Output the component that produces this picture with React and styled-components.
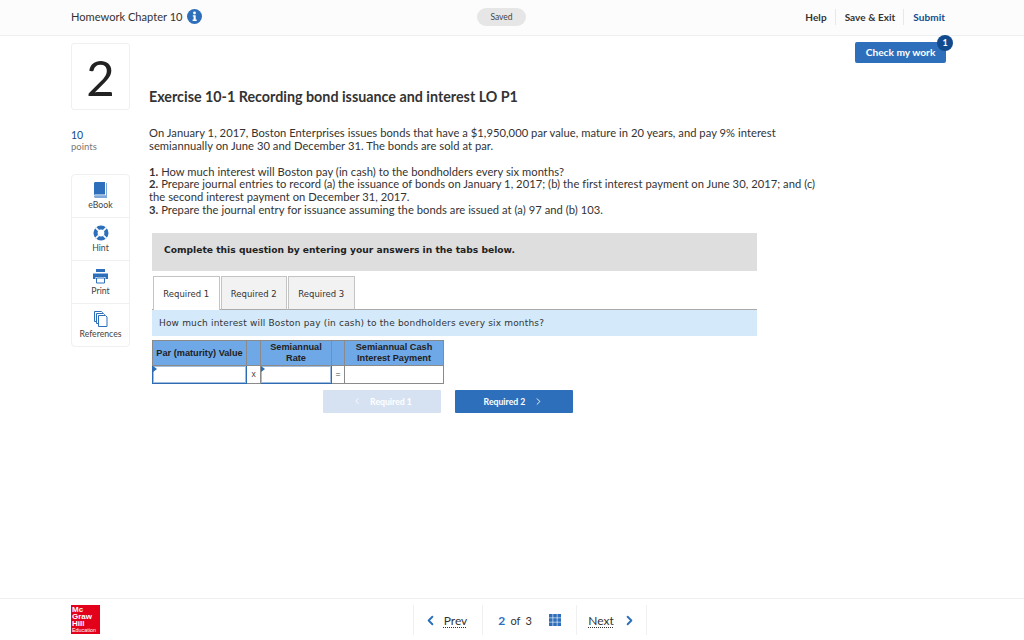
import React from "react";
import styled, { createGlobalStyle } from "styled-components";
import { ChevronLeft, ChevronRight } from "lucide-react";

const Global = createGlobalStyle`
  html, body { margin: 0; padding: 0; background: #fff; }
  body { font-family: "Lato", "Liberation Sans", sans-serif; color: #333; }
`;

const Page = styled.div`
  width: 1024px;
  height: 640px;
  display: flex;
  flex-direction: column;
  overflow: hidden;
`;

const Header = styled.header`
  height: 33px;
  flex: none;
  display: grid;
  grid-template-columns: 406px 49px 1fr;
  align-items: center;
  padding: 0 79px 2px 71px;
  background: #fcfcfc;
  border-bottom: 1px solid #efefef;
`;

const HeaderTitle = styled.div`
  display: flex;
  align-items: center;
  gap: 4px;
  font-size: 11.1px;
  color: #333;
`;

const SavedPill = styled.div`
  height: 18px;
  line-height: 18px;
  text-align: center;
  border-radius: 9px;
  background: #e6e6e6;
  font-size: 8.5px;
  color: #444;
`;

const HeaderLinks = styled.nav`
  display: flex;
  justify-content: flex-end;
  align-items: center;
`;

const HeaderLink = styled.a`
  font-size: 10px;
  font-weight: 700;
  line-height: 16px;
  letter-spacing: 0.05px;
  padding: 0 8px 0 9px;
  color: ${(p) => (p.$accent ? "#114b8e" : "#333")};
  border-left: ${(p) => (p.$first ? "none" : "1px solid #e8e8e8")};
  &:last-child { padding-right: 0; }
`;

const Body = styled.div`
  flex: 1;
  display: flex;
  padding: 7px 0 0 71px;
`;

const LeftCol = styled.aside`
  width: 59px;
  flex: none;
`;

const NumberBox = styled.div`
  height: 65px;
  width: 57px;
  border: 1px solid #f0f0f0;
  border-radius: 3px;
  display: flex;
  align-items: center;
  justify-content: center;
  font-size: 49px;
  color: #222;
`;

const Points = styled.div`
  margin-top: 19px;
  font-size: 9.5px;
  line-height: 12px;
  color: #777;
  strong { display: block; font-weight: 400; color: #114b8e; font-size: 10.5px; }
`;

const ToolCard = styled.div`
  margin-top: 21px;
  height: 171px;
  width: 57px;
  display: flex;
  flex-direction: column;
  border: 1px solid #f0f0f0;
  border-radius: 4px;
`;

const Tool = styled.div`
  flex: 1;
  box-sizing: border-box;
  display: flex;
  flex-direction: column;
  align-items: center;
  padding-top: 7px;
  font-size: 8.7px;
  line-height: 11px;
  color: #444;
  border-top: ${(p) => (p.$first ? "none" : "1px solid #f0f0f0")};
  svg { height: 16px; margin-bottom: 1px; }
`;

const Main = styled.main`
  width: 667px;
  margin-left: 19px;
  flex: none;
`;

const Title = styled.h1`
  margin: 46px 0 0;
  font-size: 14.3px;
  line-height: 16px;
  font-weight: 700;
  color: #333;
`;

const Text = styled.p`
  margin: ${(p) => p.$top}px 0 0;
  width: 672px;
  font-size: 11.2px;
  line-height: 12.8px;
  letter-spacing: 0.04px;
  color: #333;
  b { font-weight: 700; }
`;

const Panel = styled.div`
  margin: 16px 0 0 3px;
  width: 605px;
`;

const Banner = styled.div`
  height: 38px;
  box-sizing: border-box;
  padding: 0 12px 4px;
  display: flex;
  align-items: center;
  background: #dedede;
  font-family: "DejaVu Sans", Verdana, sans-serif;
  font-size: 9.17px;
  font-weight: 700;
  color: #222;
`;

const Tabs = styled.div`
  margin-top: 5px;
  padding-left: 1px;
  display: flex;
  gap: 1px;
  height: 34px;
  box-sizing: border-box;
  border-bottom: 1px solid #aaa;
`;

const Tab = styled.div`
  width: 66.5px;
  box-sizing: border-box;
  height: 34px;
  padding-top: 2px;
  display: flex;
  align-items: center;
  justify-content: center;
  font-family: "DejaVu Sans", Verdana, sans-serif;
  font-size: 8.5px;
  color: #333;
  background: ${(p) => (p.$active ? "#fff" : "#f2f2f2")};
  border: 1px solid #c4c4c4;
  border-bottom: ${(p) => (p.$active ? "none" : "1px solid #aaa")};
`;

const Prompt = styled.div`
  height: 26px;
  box-sizing: border-box;
  padding: 0 7px;
  display: flex;
  align-items: center;
  background: #d4eafa;
  font-family: "DejaVu Sans", Verdana, sans-serif;
  font-size: 9px;
  letter-spacing: 0.17px;
  color: #333;
`;

const Table = styled.table`
  margin-top: 4px;
  border-collapse: collapse;
  table-layout: fixed;
  width: 291px;
  font-family: "Liberation Sans", Arial, sans-serif;
`;

const Th = styled.th`
  height: 24px;
  padding: 0;
  background: #6fa8e6;
  border: 1px solid #8a8a8a;
  font-size: 9.2px;
  line-height: 10.5px;
  font-weight: 700;
  color: #222;
  text-align: center;
`;

const Td = styled.td`
  height: 17px;
  padding: 0;
  border-bottom: 1px solid #8a8a8a;
  border-right: 1px solid #8a8a8a;
  font-size: 8.5px;
  color: #444;
  text-align: center;
`;

const InputCell = styled.td`
  height: 17px;
  padding: 0;
  border: 1px solid #2d6cb5;
  box-shadow: inset 0 0 0 1px rgba(45, 108, 181, 0.45);
  position: relative;
  &::before {
    content: "";
    position: absolute;
    top: 0;
    left: 0;
    border-top: 3px solid transparent;
    border-bottom: 3px solid transparent;
    border-left: 4px solid #2d6cb5;
  }
`;

const PagerRow = styled.div`
  margin-top: 6px;
  padding-left: 171px;
  display: flex;
  gap: 14px;
`;

const PagerBtn = styled.button`
  width: 118px;
  height: 23px;
  padding: 0;
  border: none;
  border-radius: 1px;
  display: flex;
  align-items: center;
  justify-content: center;
  gap: 8px;
  font-family: "Lato", sans-serif;
  font-size: 8.7px;
  font-weight: 700;
  color: #fff;
  background: ${(p) => (p.disabled ? "#d6e2f1" : "#2d6fbb")};
`;

const RightCol = styled.aside`
  margin: -1px 0 0 39px;
  display: flex;
  align-items: flex-start;
`;

const CheckBtn = styled.button`
  position: relative;
  width: 91px;
  height: 21px;
  padding: 0 0 2px;
  border: none;
  border-radius: 2px;
  background: #2d6fbb;
  color: #fff;
  font-family: "Lato", sans-serif;
  font-size: 10.2px;
  font-weight: 700;
`;

const Badge = styled.span`
  position: absolute;
  top: -7px;
  right: -7px;
  width: 16px;
  height: 16px;
  line-height: 16px;
  border-radius: 50%;
  background: #114b8e;
  font-size: 9px;
  text-align: center;
`;

const Footer = styled.footer`
  height: 42px;
  flex: none;
  box-sizing: border-box;
  border-top: 1px solid #efefef;
  display: flex;
  padding: 6px 0 0 71px;
`;

const Logo = styled.div`
  width: 29px;
  height: 29px;
  box-sizing: border-box;
  padding: 1px 1px;
  background: #e2001a;
  color: #fff;
  font-family: "Liberation Sans", Arial, sans-serif;
  font-size: 8px;
  line-height: 7px;
  font-weight: 700;
  small { display: block; font-size: 5.4px; font-weight: 400; line-height: 6px; }
`;

const FooterNav = styled.nav`
  margin-left: 313px;
  display: flex;
  height: 30px;
  border-right: 1px solid #f0f0f0;
`;

const NavPart = styled.div`
  width: ${(p) => p.$w}px;
  box-sizing: border-box;
  display: flex;
  align-items: center;
  justify-content: center;
  gap: ${(p) => p.$gap}px;
  padding: ${(p) => p.$pad || "0"};
  border-left: 1px solid #f0f0f0;
  font-size: 12px;
  color: #333;
  svg { color: #2d6fbb; }
`;

const NavLabel = styled.span`
  text-decoration: underline dotted;
  text-underline-offset: 2px;
`;

const PageNum = styled.span`
  font-size: 11px;
  word-spacing: 2.5px;
  b { color: #2d6fbb; font-size: 12px; font-weight: 700; }
`;

const InfoIcon = () => (
  <svg width="15" height="15" viewBox="0 0 15 15">
    <circle cx="7.5" cy="7.5" r="7.5" fill="#2d6fbb" />
    <circle cx="7.5" cy="4" r="1.4" fill="#fff" />
    <path d="M5.8 6.2h2.9v4.4h1v1.3H5.6v-1.3h1V7.5h-.8z" fill="#fff" />
  </svg>
);

const BookIcon = () => (
  <svg width="15" height="16" viewBox="0 0 15 16">
    <path d="M1 1.5C1 .7 1.6 0 2.4 0H12v12.5H2.5c-.8 0-1.5.4-1.5 1z" fill="#2d6fbb" />
    <path d="M13 1h1v15H2.5C1.6 16 1 15.3 1 14.5c0-.8.6-1.2 1.5-1.2H13z" fill="#7fa9d8" />
  </svg>
);

const BuoyIcon = () => (
  <svg width="16" height="16" viewBox="0 0 16 16">
    <circle cx="8" cy="8" r="7.5" fill="#2d6fbb" />
    <circle cx="8" cy="8" r="3.4" fill="#fff" />
    <path d="M2.6 2.6l3 3M13.4 2.6l-3 3M2.6 13.4l3-3M13.4 13.4l-3-3" stroke="#fff" strokeWidth="1.6" />
  </svg>
);

const PrinterIcon = () => (
  <svg width="15" height="16" viewBox="0 0 15 16">
    <path d="M3 1h9v3H3z" fill="#2d6fbb" />
    <path d="M0 5.5h15V11h-2.5V9h-10v2H0z" fill="#2d6fbb" />
    <path d="M3.5 10h8v5h-8z" fill="#fff" stroke="#2d6fbb" strokeWidth="1" />
  </svg>
);

const PagesIcon = () => (
  <svg width="14" height="16" viewBox="0 0 14 16" fill="#fff" stroke="#2d6fbb" strokeWidth="1">
    <path d="M.5.5h7l1 1v9h-8z" />
    <path d="M2.5 2.5h7l1 1v9h-8z" />
    <path d="M4.5 4.5h7l1.5 1.5v9.5H4.5z" />
  </svg>
);

const GridIcon = () => (
  <svg width="12" height="12" viewBox="0 0 12 12" fill="#2d6fbb">
    {[0, 4.2, 8.4].map((y) =>
      [0, 4.2, 8.4].map((x) => <rect key={`${x}-${y}`} x={x} y={y} width="3.6" height="3.6" />)
    )}
  </svg>
);

export default function App() {
  return (
    <Page>
      <Global />
      <Header>
        <HeaderTitle>
          Homework Chapter 10 <InfoIcon />
        </HeaderTitle>
        <SavedPill>Saved</SavedPill>
        <HeaderLinks>
          <HeaderLink $first>Help</HeaderLink>
          <HeaderLink>Save &amp; Exit</HeaderLink>
          <HeaderLink $accent>Submit</HeaderLink>
        </HeaderLinks>
      </Header>

      <Body>
        <LeftCol>
          <NumberBox>2</NumberBox>
          <Points>
            <strong>10</strong>
            points
          </Points>
          <ToolCard>
            <Tool $first><BookIcon />eBook</Tool>
            <Tool><BuoyIcon />Hint</Tool>
            <Tool><PrinterIcon />Print</Tool>
            <Tool><PagesIcon />References</Tool>
          </ToolCard>
        </LeftCol>

        <Main>
          <Title>Exercise 10-1 Recording bond issuance and interest LO P1</Title>
          <Text $top={22}>
            On January 1, 2017, Boston Enterprises issues bonds that have a $1,950,000 par value, mature in 20 years, and pay 9% interest
            semiannually on June 30 and December 31. The bonds are sold at par.
          </Text>
          <Text $top={13}>
            <b>1.</b> How much interest will Boston pay (in cash) to the bondholders every six months?<br />
            <b>2.</b> Prepare journal entries to record (a) the issuance of bonds on January 1, 2017; (b) the first interest payment on June 30, 2017; and (c)
            the second interest payment on December 31, 2017.<br />
            <b>3.</b> Prepare the journal entry for issuance assuming the bonds are issued at (a) 97 and (b) 103.
          </Text>

          <Panel>
            <Banner>Complete this question by entering your answers in the tabs below.</Banner>
            <Tabs>
              <Tab $active>Required 1</Tab>
              <Tab>Required 2</Tab>
              <Tab>Required 3</Tab>
            </Tabs>
            <Prompt>How much interest will Boston pay (in cash) to the bondholders every six months?</Prompt>
            <Table>
              <colgroup>
                <col width="94" />
                <col width="14" />
                <col width="71" />
                <col width="13" />
                <col width="99" />
              </colgroup>
              <thead>
                <tr>
                  <Th>Par (maturity) Value</Th>
                  <Th />
                  <Th>Semiannual<br />Rate</Th>
                  <Th />
                  <Th>Semiannual Cash<br />Interest Payment</Th>
                </tr>
              </thead>
              <tbody>
                <tr>
                  <InputCell />
                  <Td>x</Td>
                  <InputCell />
                  <Td>=</Td>
                  <Td />
                </tr>
              </tbody>
            </Table>
            <PagerRow>
              <PagerBtn disabled><ChevronLeft size={10} />Required 1</PagerBtn>
              <PagerBtn>Required 2<ChevronRight size={11} /></PagerBtn>
            </PagerRow>
          </Panel>
        </Main>

        <RightCol>
          <CheckBtn>
            Check my work
            <Badge>1</Badge>
          </CheckBtn>
        </RightCol>
      </Body>

      <Footer>
        <Logo>
          Mc<br />Graw<br />Hill
          <small>Education</small>
        </Logo>
        <FooterNav>
          <NavPart $w={69} $gap={6} $pad="0 6px 0 0"><ChevronLeft size={15} strokeWidth={3} /><NavLabel>Prev</NavLabel></NavPart>
          <NavPart $w={94} $gap={17}><PageNum><b>2</b> of 3</PageNum><GridIcon /></NavPart>
          <NavPart $w={70} $gap={8} $pad="0 0 0 2px"><NavLabel>Next</NavLabel><ChevronRight size={15} strokeWidth={3} /></NavPart>
        </FooterNav>
      </Footer>
    </Page>
  );
}
